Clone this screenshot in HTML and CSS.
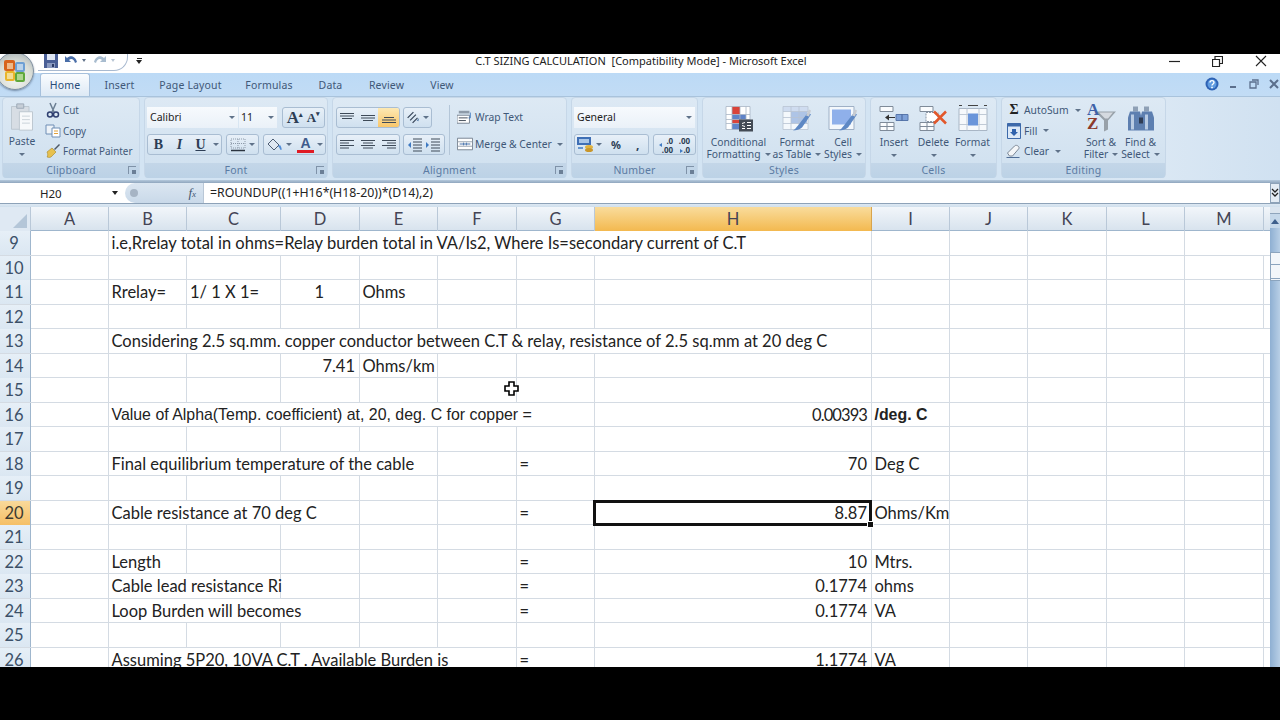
FILE: index.html
```html
<!DOCTYPE html>
<html lang="en">
<head>
<meta charset="utf-8">
<title>C.T SIZING CALCULATION - Microsoft Excel</title>
<link rel="stylesheet" href="styles.css">
</head>
<body>
<div class="app">
  <div class="office-btn">
    <svg width="26" height="26" viewBox="0 0 26 26"><rect x="2" y="2" width="11" height="11" rx="2" fill="#d8631c"/><rect x="5" y="5" width="6" height="6" fill="#eeb98a"/><rect x="13" y="4" width="10" height="10" rx="2" fill="#6d9fd4"/><rect x="15" y="6" width="6" height="6" fill="#b9d2ea"/><rect x="3" y="13" width="10" height="10" rx="2" fill="#e9b52a"/><rect x="5" y="15" width="6" height="6" fill="#f3dc94"/><rect x="13" y="14" width="10" height="10" rx="2" fill="#5fa83c"/><rect x="15" y="16" width="6" height="6" fill="#aed68f"/></svg>
  </div>

  <header class="titlebar">
    <div class="qat">
      <svg width="14" height="14" viewBox="0 0 14 14"><path d="M0 0h14v14H0z" fill="#4a5f96"/><path d="M3 0h8v6H3z" fill="#dfe6f3"/><path d="M3 9h8v5H3z" fill="#8b9ac0"/><path d="M8 10h2v3H8z" fill="#2b3a66"/></svg>
      <svg class="qi" width="14" height="13" viewBox="0 0 14 13"><path d="M1 2v6h6L5 6c2-2 5-1 6 3l2-1C12 3 7 0 3 4z" fill="#4a6ea8"/></svg>
      <span class="caret small"></span>
      <svg class="qi2" width="14" height="13" viewBox="0 0 14 13"><path d="M13 2v6H7l2-2C7 4 4 5 3 9L1 8c1-5 6-8 10-4z" fill="#a8bccf"/></svg>
      <span class="caret small pale"></span>
    </div>
    <span class="qat-more"><i></i><span class="caret small dark"></span></span>
    <div class="title">C.T SIZING CALCULATION&nbsp; [Compatibility Mode] - Microsoft Excel</div>
    <div class="winctl">
      <svg width="11" height="11" viewBox="0 0 11 11"><path d="M0 5.500h11" stroke="#222" stroke-width="1.200"/></svg>
      <svg width="11" height="11" viewBox="0 0 11 11"><path d="M.5 3.500h7v7h-7zM3 3V.5h7.500v7H8" fill="none" stroke="#222" stroke-width="1.200"/></svg>
      <svg width="12" height="12" viewBox="0 0 12 12"><path d="M1 1l10 10M11 1L1 11" stroke="#222" stroke-width="1.100"/></svg>
    </div>
  </header>

  <nav class="tabs">
    <span class="tab active">Home</span>
    <span class="tab w-insert">Insert</span>
    <span class="tab w-layout">Page Layout</span>
    <span class="tab w-form">Formulas</span>
    <span class="tab w-data">Data</span>
    <span class="tab w-review">Review</span>
    <span class="tab w-view">View</span>
    <div class="wb-ctl">
      <svg width="14" height="14" viewBox="0 0 14 14"><circle cx="7" cy="7" r="6.500" fill="#2e62b4"/><circle cx="7" cy="7" r="4.500" fill="#5f9be0"/><path d="M5 5.500c0-2.500 4-2.500 4 0 0 1.500-2 1.500-2 3" fill="none" stroke="#fff" stroke-width="1.400"/><path d="M6.200 9.700h1.600v1.500H6.200z" fill="#fff"/></svg>
      <svg width="10" height="10" viewBox="0 0 10 10"><path d="M1 7h6v2H1z" fill="#5b6f8c"/></svg>
      <svg width="10" height="10" viewBox="0 0 10 10"><path d="M1 3h6v6H1zM3 1h6v5" fill="none" stroke="#5b6f8c" stroke-width="1.300"/></svg>
      <svg width="10" height="10" viewBox="0 0 10 10"><path d="M1 1l8 8M9 1L1 9" stroke="#5b6f8c" stroke-width="2"/></svg>
    </div>
  </nav>

  <section class="ribbon">
    <div class="group g-clip">
      <div class="body">
        <div class="big paste">
          <svg width="26" height="32" viewBox="0 0 26 32"><path d="M1 4h20v26H1z" fill="#d7dde4" stroke="#b9c3cd"/><path d="M7 1h8v5H7z" fill="#c6ced7" stroke="#98a5b3"/><path d="M10 10h15v21H10z" fill="#f7f9fb" stroke="#b8c2cc"/><path d="M13 15h9M13 19h9M13 23h9" stroke="#c6ced6"/></svg>
          <span class="lbl">Paste</span>
          <span class="caret"></span>
        </div>
        <div class="stack clip-stack">
          <div class="sm"><svg width="16" height="16" viewBox="0 0 16 16"><path d="M5 1l4 9M11 1L7 10" stroke="#6a7d92" stroke-width="1.500"/><circle cx="5" cy="12.500" r="2.500" fill="none" stroke="#2f3f70" stroke-width="1.500"/><circle cx="11" cy="12.500" r="2.500" fill="none" stroke="#2f3f70" stroke-width="1.500"/></svg><span>Cut</span></div>
          <div class="sm"><svg width="16" height="14" viewBox="0 0 16 14"><path d="M1 1h8v9H1z" fill="#eef3f8" stroke="#6f8eb5"/><path d="M7 4h8v9H7z" fill="#fff" stroke="#6f8eb5"/><path d="M9 7h4M9 9.500h4" stroke="#e0a03a"/></svg><span>Copy</span></div>
          <div class="sm"><svg width="16" height="16" viewBox="0 0 16 16"><path d="M9 6l5-5 1 1-5 5z" fill="#4d5866"/><path d="M2 9l5-4 4 4-5 5c-2 1-3 0-4 0 1-1 1-3 0-5z" fill="#e7c14f" stroke="#a58528" stroke-width=".6"/></svg><span>Format Painter</span></div>
        </div>
      </div>
      <div class="label">Clipboard<i class="launch"></i></div>
    </div>

    <div class="group g-font">
      <div class="body col">
        <div class="line">
          <div class="combo c-font">Calibri<span class="caret"></span></div>
          <div class="combo c-size">11<span class="caret"></span></div>
          <div class="btns b-size">
            <span class="gl serif big-a">A<sup>&#9652;</sup></span>
            <span class="gl serif small-a">A<sup>&#9662;</sup></span>
          </div>
        </div>
        <div class="line">
          <div class="btns b-bold"><span class="gl serif bold">B</span><span class="gl serif ital">I</span><span class="gl serif under">U</span><span class="caret"></span></div>
          <div class="btns b-border"><svg width="16" height="14" viewBox="0 0 16 14"><path d="M1 1h14v9H1z" fill="none" stroke="#8d9aa9" stroke-dasharray="1 1"/><path d="M1 5.500h14M8 1v9" stroke="#8d9aa9" stroke-dasharray="1 1"/><path d="M1 12.500h14" stroke="#2b3440" stroke-width="1.500"/></svg><span class="caret"></span></div>
          <div class="btns b-fill"><svg width="16" height="14" viewBox="0 0 16 14"><path d="M7 1l6 6-5 5-6-6z" fill="#dfe8f2" stroke="#4d5d73"/><path d="M12 8c2 2 2 4 3 4s1-2-1-5z" fill="#4f8bd6"/></svg><span class="caret"></span><span class="gl acolor">A</span><span class="caret"></span></div>
        </div>
      </div>
      <div class="label">Font<i class="launch"></i></div>
    </div>

    <div class="group g-align">
      <div class="body">
        <div class="col">
          <div class="line">
            <div class="btns b-align">
              <span class="al"><svg width="16" height="12" viewBox="0 0 16 12"><path d="M1 1.500h14M1 4h14M3 6.500h10" stroke="#3e4a58" stroke-width="1.200"/></svg></span>
              <span class="al"><svg width="16" height="12" viewBox="0 0 16 12"><path d="M1 3.500h14M1 6h14M3 8.500h10" stroke="#3e4a58" stroke-width="1.200"/></svg></span>
              <span class="al on"><svg width="16" height="12" viewBox="0 0 16 12"><path d="M3 5.500h10M1 8h14M1 10.500h14" stroke="#3e4a58" stroke-width="1.200"/></svg></span>
            </div>
            <div class="btns b-orient"><svg width="17" height="15" viewBox="0 0 17 15"><path d="M2 8l7-7M5 11l7-7M8 14l6-6" stroke="#37465a" stroke-width="1.500"/><path d="M13 11l3-3-1 4z" fill="#5a7faa"/></svg><span class="caret"></span></div>
          </div>
          <div class="line">
            <div class="btns b-align">
              <span class="al"><svg width="16" height="12" viewBox="0 0 16 12"><path d="M1 1.500h14M1 4h9M1 6.500h14M1 9h9" stroke="#3e4a58" stroke-width="1.200"/></svg></span>
              <span class="al"><svg width="16" height="12" viewBox="0 0 16 12"><path d="M1 1.500h14M3 4h10M1 6.500h14M3 9h10" stroke="#3e4a58" stroke-width="1.200"/></svg></span>
              <span class="al"><svg width="16" height="12" viewBox="0 0 16 12"><path d="M1 1.500h14M6 4h9M1 6.500h14M6 9h9" stroke="#3e4a58" stroke-width="1.200"/></svg></span>
            </div>
            <div class="btns b-indent">
              <svg width="16" height="14" viewBox="0 0 16 14"><path d="M6 1h9M6 4h9M6 7h9M6 10h9M6 13h9" stroke="#3e4a58"/><path d="M4 4L1 7l3 3z" fill="#3f7ac2"/></svg>
              <svg width="16" height="14" viewBox="0 0 16 14"><path d="M6 1h9M6 4h9M6 7h9M6 10h9M6 13h9" stroke="#3e4a58"/><path d="M1 4l3 3-3 3z" fill="#3f7ac2"/></svg>
            </div>
          </div>
        </div>
        <div class="sep"></div>
        <div class="col wrapcol">
          <div class="sm"><svg width="18" height="14" viewBox="0 0 18 14"><path d="M0 5h14v9H0z" fill="#fff" stroke="#6f7b8a"/><path d="M2 8h10M2 11h8" stroke="#333d4a"/><path d="M2 0h12v3H2z" fill="#8e9aa8"/><path d="M15 2v6h-2" fill="none" stroke="#3f7ac2"/></svg><span>Wrap Text</span></div>
          <div class="sm"><svg width="18" height="14" viewBox="0 0 18 14"><path d="M.5.500h17v13H.5z" fill="#fff" stroke="#6f7b8a"/><path d="M.5 4.500h17M.5 9.500h17" stroke="#8d98a6"/><path d="M3 7h4M15 7h-4" stroke="#2f5f9f"/><path d="M7 5v4l2-2zM11 5v4L9 7z" fill="#2f5f9f"/></svg><span>Merge &amp; Center</span><span class="caret merge-caret"></span></div>
        </div>
      </div>
      <div class="label">Alignment<i class="launch"></i></div>
    </div>

    <div class="group g-num">
      <div class="body col">
        <div class="combo c-gen">General<span class="caret"></span></div>
        <div class="line">
          <div class="btns b-money"><svg width="18" height="16" viewBox="0 0 18 16"><path d="M0 0h14v8H0z" fill="#3f6fb5"/><path d="M2 2h10v4H2z" fill="#a9c6e8"/><ellipse cx="12" cy="10" rx="4" ry="2" fill="#e0b23d"/><ellipse cx="12" cy="13" rx="4" ry="2" fill="#c9962a"/><path d="M1 11h5" stroke="#3f7ac2" stroke-width="1.500"/></svg><span class="caret"></span><span class="gl pct">%</span><span class="gl comma">,</span></div>
          <div class="btns b-dec"><span class="dec"><i class="arrow-l"></i><b>.0<br>.00</b></span><span class="dec"><b class="r">.00<br><i class="arrow-r"></i>.0</b></span></div>
        </div>
      </div>
      <div class="label">Number<i class="launch"></i></div>
    </div>

    <div class="group g-styles">
      <div class="body spread">
        <div class="big w-cf">
          <svg width="28" height="26" viewBox="0 0 28 26"><path d="M1 1h24v23H1z" fill="#fff"/><path d="M7 1h8v8H7z" fill="#d9433a"/><path d="M7 9h14v5H7z" fill="#5f83c8"/><path d="M7 14h10v4H7z" fill="#d9433a"/><path d="M7 18h8v6H7z" fill="#5f83c8"/><path d="M1 1h24v23H1zM7 1v23M15 1v23M21 1v23M1 9h24M1 14h24M1 18h24" fill="none" stroke="#a8b5c4" stroke-width=".8"/><path d="M14 14h14v12H14z" fill="#434b55"/><path d="M17 18l3-1M17 20l3 1M22 17h4M22 20h4M17 23h3M22 23h4" stroke="#fff"/></svg>
          <span class="lbl">Conditional<br>Formatting<span class="caret inl"></span></span>
        </div>
        <div class="big w-ft">
          <svg width="30" height="26" viewBox="0 0 30 26"><path d="M1 1h25v23H1z" fill="#f4f8fc"/><path d="M1 1h25v5H1z" fill="#cfdcf0"/><path d="M9 6h16v12H9z" fill="#aec4e6"/><path d="M1 1h25v23H1zM9 1v23M17 1v23M1 6h25M1 12h25M1 18h25" fill="none" stroke="#b7c3d2" stroke-width=".8"/><path d="M16 20l10-13 3 2-9 13c-2 2-6 3-9 3 2-1 3-3 5-5z" fill="#5e88c4"/><path d="M24 10l3-6 2 1-2 6z" fill="#c8ccd2"/></svg>
          <span class="lbl">Format<br>as Table<span class="caret inl"></span></span>
        </div>
        <div class="big w-cs">
          <svg width="30" height="26" viewBox="0 0 30 26"><path d="M1 1h25v23H1z" fill="#f4f8fc" stroke="#9fb0c6"/><path d="M4 4h19v15H4z" fill="#8fb0ea"/><path d="M16 20l10-13 3 2-9 13c-2 2-6 3-9 3 2-1 3-3 5-5z" fill="#5e88c4"/><path d="M24 10l3-6 2 1-2 6z" fill="#c8ccd2"/></svg>
          <span class="lbl">Cell<br>Styles<span class="caret inl"></span></span>
        </div>
      </div>
      <div class="label">Styles</div>
    </div>

    <div class="group g-cells">
      <div class="body spread">
        <div class="big w-cell">
          <svg width="30" height="26" viewBox="0 0 30 26"><path d="M1 1h13v5H1zM1 17h14v8H1zM8 17v8M1 21h14" fill="#fafcfe" stroke="#7f8b99"/><path d="M17 9h12v6H17z" fill="#7ea1d8" stroke="#5877ab"/><path d="M23 9v6" stroke="#46639b"/><path d="M8 12h8" stroke="#333"/><path d="M6 12l4-3v6z" fill="#333"/></svg>
          <span class="lbl">Insert</span><span class="caret"></span>
        </div>
        <div class="big w-cell">
          <svg width="30" height="26" viewBox="0 0 30 26"><path d="M1 1h13v5H1zM1 17h14v8H1zM8 17v8M1 21h14" fill="#fafcfe" stroke="#7f8b99"/><path d="M7 7h12v9H7z" fill="#fff" stroke="#8a96a5" stroke-dasharray="2 1"/><path d="M15 6l12 12M27 6L15 18" stroke="#e2572b" stroke-width="2.500"/></svg>
          <span class="lbl">Delete</span><span class="caret"></span>
        </div>
        <div class="big w-cell">
          <svg width="30" height="28" viewBox="0 0 30 28"><path d="M1 1h3M10 1h10M26 1h3" stroke="#444"/><path d="M1 4h28v22H1z" fill="#f6f9fc" stroke="#a9b6c5"/><path d="M9 4v22M21 4v22M1 10h28M1 20h28" stroke="#c0cad6"/><path d="M10 9h10v12H10z" fill="#6a95da"/></svg>
          <span class="lbl">Format</span><span class="caret"></span>
        </div>
      </div>
      <div class="label">Cells</div>
    </div>

    <div class="group g-edit">
      <div class="body">
        <div class="stack edit-stack">
          <div class="sm"><span class="sigma">&#931;</span><span>AutoSum</span><span class="caret"></span></div>
          <div class="sm"><svg width="14" height="16" viewBox="0 0 14 16"><path d="M.5.500h13v15H.5z" fill="#dbe8f7" stroke="#3c69aa"/><path d="M.5.500h13v3H.5z" fill="#3c69aa"/><path d="M5 6h4v3h2l-4 4-4-4h2z" fill="#2f62ad"/></svg><span>Fill</span><span class="caret"></span></div>
          <div class="sm"><svg width="15" height="14" viewBox="0 0 15 14"><path d="M1 9l7-7c2-2 6 1 4 3l-6 7H3z" fill="#f4f6f8" stroke="#7c8795"/><path d="M0 13.500h13" stroke="#4f6d96"/></svg><span>Clear</span><span class="caret"></span></div>
        </div>
        <div class="big w-sort">
          <svg width="30" height="28" viewBox="0 0 30 28"><path d="M9 7h21l-8 9v9l-4 2V16z" fill="#98a1a9"/><path d="M13 8h14l-5 6h-3z" fill="#d5dae0"/></svg>
          <span class="az a">A</span><span class="az z">Z</span>
          <span class="lbl">Sort &amp;<br>Filter<span class="caret inl"></span></span>
        </div>
        <div class="big w-find">
          <svg width="28" height="26" viewBox="0 0 28 26"><path d="M6 1h5v5H6zM17 1h5v5h-5z" fill="#8ea0b6"/><path d="M3 6h10l1 4h0v15H1V12z" fill="#5d7fb0"/><path d="M15 6h10l2 6v13H14V10z" fill="#5d7fb0"/><path d="M4 9h3v15H4zM18 9h3v15h-3z" fill="#b8cbe3"/><path d="M12 12h4v6h-4z" fill="#2e3c54"/></svg>
          <span class="lbl">Find &amp;<br>Select<span class="caret inl"></span></span>
        </div>
      </div>
      <div class="label">Editing</div>
    </div>
  </section>

  <div class="divider"></div>

  <section class="formula">
    <div class="namebox">H20<span class="caret dark"></span></div>
    <div class="fxarea"><span class="pill"></span><span class="fx">f<small>x</small></span></div>
    <div class="finput">=ROUNDUP((1+H16*(H18-20))*(D14),2)</div>
    <div class="fexpand"><svg width="8" height="10" viewBox="0 0 8 10"><path d="M1 1l3 3 3-3M1 5l3 3 3-3" fill="none" stroke="#222" stroke-width="1.300"/></svg></div>
  </section>

  <div class="gapband"></div>

  <main class="sheet">
    <div class="grid">
      <div class="row head">
        <div class="corner"><i></i></div><div>A</div><div>B</div><div>C</div><div>D</div><div>E</div><div>F</div><div>G</div><div class="hi">H</div><div>I</div><div>J</div><div>K</div><div>L</div><div>M</div><div class="fill"></div>
      </div>
      <div class="row"><div class="rh">9</div><div></div><div class="s7">i.e,Rrelay total in ohms=Relay burden total in VA/Is2, Where Is=secondary current of C.T</div><div></div><div></div><div></div><div></div></div>
      <div class="row"><div class="rh">10</div><div></div><div></div><div></div><div></div><div></div><div></div><div></div><div></div><div></div><div></div><div></div><div></div><div></div></div>
      <div class="row"><div class="rh">11</div><div></div><div>Rrelay=</div><div class="c">1/ 1 X 1=</div><div class="ctr">1</div><div>Ohms</div><div></div><div></div><div></div><div></div><div></div><div></div><div></div><div></div></div>
      <div class="row"><div class="rh">12</div><div></div><div></div><div></div><div></div><div></div><div></div><div></div><div></div><div></div><div></div><div></div><div></div><div></div></div>
      <div class="row"><div class="rh">13</div><div></div><div class="s7">Considering 2.5 sq.mm. copper conductor between C.T &amp; relay, resistance of 2.5 sq.mm at 20 deg C</div><div></div><div></div><div></div><div></div></div>
      <div class="row"><div class="rh">14</div><div></div><div></div><div></div><div class="r">7.41</div><div>Ohms/km</div><div></div><div></div><div></div><div></div><div></div><div></div><div></div><div></div></div>
      <div class="row"><div class="rh">15</div><div></div><div></div><div></div><div></div><div></div><div></div><div></div><div></div><div></div><div></div><div></div><div></div><div></div></div>
      <div class="row"><div class="rh">16</div><div></div><div class="s6 arial">Value of Alpha(Temp. coefficient) at, 20, deg. C for copper =</div><div class="r tight">0.00393</div><div class="arial bold">/deg. C</div><div></div><div></div><div></div><div></div></div>
      <div class="row"><div class="rh">17</div><div></div><div></div><div></div><div></div><div></div><div></div><div></div><div></div><div></div><div></div><div></div><div></div><div></div></div>
      <div class="row"><div class="rh">18</div><div></div><div class="s4">Final equilibrium temperature of the cable</div><div></div><div>=</div><div class="r">70</div><div>Deg C</div><div></div><div></div><div></div><div></div></div>
      <div class="row"><div class="rh">19</div><div></div><div></div><div></div><div></div><div></div><div></div><div></div><div></div><div></div><div></div><div></div><div></div><div></div></div>
      <div class="row"><div class="rh hi">20</div><div></div><div class="s3">Cable resistance at 70 deg C</div><div></div><div></div><div>=</div><div class="r sel">8.87</div><div>Ohms/Km</div><div></div><div></div><div></div><div></div></div>
      <div class="row"><div class="rh">21</div><div></div><div></div><div></div><div></div><div></div><div></div><div></div><div></div><div></div><div></div><div></div><div></div><div></div></div>
      <div class="row"><div class="rh">22</div><div></div><div>Length</div><div></div><div></div><div></div><div></div><div>=</div><div class="r">10</div><div>Mtrs.</div><div></div><div></div><div></div><div></div></div>
      <div class="row"><div class="rh">23</div><div></div><div class="s2">Cable lead resistance Ri</div><div></div><div></div><div></div><div>=</div><div class="r">0.1774</div><div>ohms</div><div></div><div></div><div></div><div></div></div>
      <div class="row"><div class="rh">24</div><div></div><div class="s3">Loop Burden will becomes</div><div></div><div></div><div>=</div><div class="r">0.1774</div><div>VA</div><div></div><div></div><div></div><div></div></div>
      <div class="row"><div class="rh">25</div><div></div><div></div><div></div><div></div><div></div><div></div><div></div><div></div><div></div><div></div><div></div><div></div><div></div></div>
      <div class="row"><div class="rh">26</div><div></div><div class="s5">Assuming 5P20, 10VA C.T . Available Burden is</div><div>=</div><div class="r">1.1774</div><div>VA</div><div></div><div></div><div></div><div></div></div>
    </div>
    <div class="scrollbar">
      <div class="sb-top"></div>
      <div class="sb-up"><span></span></div>
      <div class="sb-thumb"></div>
    </div>
    <svg class="cursor" width="15" height="15" viewBox="0 0 15 15"><path d="M5 1h5v4h4v5h-4v4H5v-4H1V5h4z" fill="#fff" stroke="#000" stroke-width="1.600"/></svg>
  </main>
</div>
</body>
</html>
```
FILE: styles.css
```css
* { box-sizing: border-box; }
html, body { margin: 0; height: 100%; }
body { background: #000; overflow: hidden; font-family: "Noto Sans", "Open Sans", sans-serif; }

.app { position: relative; margin-top: 54px; height: 613px; width: 1280px; background: #fff; overflow: hidden; display: flex; flex-direction: column; }

.office-btn { position: absolute; left: -4px; top: -2px; width: 38px; height: 38px; border-radius: 50%; background: radial-gradient(circle at 50% 70%, #f4f6f4 0, #d8dcd6 55%, #9aa6ad 100%); border: 1px solid #7f8f9f; display: flex; align-items: center; justify-content: center; z-index: 3; box-shadow: 0 1px 2px rgba(40,60,90,.5); }

.titlebar { height: 19px; flex: none; display: flex; align-items: flex-start; background: #fff; position: relative; }
.qat { width: 90px; height: 17px; margin-left: 38px; padding: 0 0 3px 6px; display: flex; align-items: center; gap: 4px; border: 1px solid #a9bad0; border-top: 0; border-left: 0; border-radius: 0 0 14px 0; }
.qi { margin-left: 2px; }
.qi2 { margin-left: 3px; }
.qat-more { margin: 4px 0 0 8px; display: flex; flex-direction: column; align-items: center; gap: 1px; }
.qat-more i { width: 5px; height: 1px; background: #222; }
.title { position: absolute; left: 0; right: 0; top: 0; text-align: center; padding-left: 2px; font: 11px/14px "Noto Sans", sans-serif; color: #222; }
.winctl { margin-left: auto; display: flex; align-items: center; gap: 32px; padding-right: 13px; margin-top: 1px; }

.caret { display: inline-block; width: 0; height: 0; border-left: 3px solid transparent; border-right: 3px solid transparent; border-top: 3px solid #5f7289; flex: none; }
.caret.small { border-left-width: 2.500px; border-right-width: 2.500px; }
.caret.pale { border-top-color: #b9c6d4; }
.caret.dark { border-top-color: #222; border-left-width: 3.500px; border-right-width: 3.500px; border-top-width: 4px; }
.caret.inl { margin-left: 4px; vertical-align: 2px; }

.tabs { height: 23px; flex: none; display: flex; align-items: flex-end; background: linear-gradient(#bcdaf6, #c2dcf5); font-size: 10.500px; color: #3f5878; padding-left: 40px; position: relative; }
.tab { height: 22px; line-height: 22px; text-align: center; flex: none; letter-spacing: .15px; }
.tab.active { width: 50px; height: 23px; background: linear-gradient(#fafcfe, #dde9f5); border: 1px solid #a6c0dc; border-bottom: 0; border-radius: 3px 3px 0 0; color: #264b78; }
.w-insert { width: 59px; }
.w-layout { width: 83px; }
.w-form { width: 74px; }
.w-data { width: 49px; }
.w-review { width: 63px; }
.w-view { width: 48px; }
.wb-ctl { align-self: center; display: flex; align-items: center; gap: 10px; margin: 0 1px 1px auto; }

.ribbon { height: 84px; flex: none; padding: 0 0 0 2px; display: flex; gap: 4px; background: linear-gradient(90deg, #d3e4f3, #d3e4f3 80%, #dbe8f4 90%, #d0e1f1); border-top: 1px solid #a9c3dc; }
.group { display: flex; flex-direction: column; height: 81px; border-radius: 4px; border: 1px solid #c6d7e8; background: linear-gradient(#dde9f4, #cfe0ef); position: relative; }
.g-clip { width: 138px; } .g-font { width: 184px; } .g-align { width: 235px; } .g-num { width: 127px; }
.g-styles { width: 164px; } .g-cells { width: 127px; } .g-edit { width: 165px; }
.body { height: 65px; flex: none; display: flex; font-size: 10.300px; color: #3f5878; }
.col { display: flex; flex-direction: column; gap: 6px; }
.body.col { padding: 9px 0 0 2px; }
.label { height: 15px; flex: none; font-size: 10.500px; line-height: 15px; text-align: center; color: #5b7ba3; background: linear-gradient(#c3d6e8, #bcd2e6); border-radius: 0 0 3px 3px; position: relative; letter-spacing: .2px; }
.launch { position: absolute; right: 3px; top: 3px; width: 8px; height: 8px; border: 1px solid #7f92a8; border-width: 1px 0 0 1px; }
.launch::after { content: ""; position: absolute; right: 0; bottom: 0; width: 4px; height: 4px; background: #6b7f96; }

.big { display: flex; flex-direction: column; align-items: center; text-align: center; padding-top: 6px; flex: none; position: relative; }
.big svg { height: 29px; flex: none; }
.lbl { line-height: 12px; margin-top: 3px; white-space: nowrap; }
.big > .caret { margin-top: 6px; }
.paste { width: 38px; padding-top: 5px; }
.paste svg { height: 28px; }
.paste .lbl { margin-top: 4px; }
.stack { display: flex; flex-direction: column; padding: 2px 0 0 4px; }
.clip-stack { font-size: 9.900px; }
.sm { height: 20.500px; display: flex; align-items: center; white-space: nowrap; gap: 2px; }
.sm svg { flex: none; width: 16px; }

.line { display: flex; gap: 4px; height: 21px; }
.combo { height: 21px; background: linear-gradient(#f7fafd, #eaf1f8); display: flex; align-items: center; justify-content: space-between; padding: 0 3px 1px 3px; color: #222; font-size: 10.500px; }
.c-font { width: 91px; }
.c-size { width: 38px; margin-left: -3px; padding-left: 2px; }
.c-gen { width: 121px; }
.btns { height: 21px; border: 1px solid #a9bdd2; border-radius: 3px; background: linear-gradient(#e8f0f8, #cfe0ef); display: flex; align-items: center; justify-content: space-around; padding: 0 2px; color: #2d3e55; }
.b-size { width: 43px; margin-left: 1px; }
.b-bold { width: 75px; padding: 0; justify-content: flex-start; }
.b-bold .gl { width: 21px; text-align: center; font-size: 14px; line-height: 1; }
.b-bold .caret { margin-left: 2px; }
.b-border { width: 33px; }
.b-fill { width: 63px; justify-content: flex-start; }
.b-fill .caret { margin-left: 3px; }
.b-fill .caret:nth-child(2) { margin-left: 4px; }
.b-fill .acolor { margin-left: 5px; width: 17px; text-align: center; }
.gl { font-size: 13px; }
.serif { font-family: "Liberation Serif", serif; }
.big-a { font-size: 17px; font-weight: bold; line-height: 1; }
.small-a { font-size: 13px; font-weight: bold; line-height: 1; }
.big-a sup, .small-a sup { font-size: 7px; vertical-align: 6px; }
.bold { font-weight: bold; }
.ital { font-style: italic; font-weight: bold; }
.under { text-decoration: underline; font-weight: bold; }
.acolor { font: bold 14px/1 "Liberation Sans", sans-serif; color: #3f5b8c; border-bottom: 3px solid #e01b24; }

.g-align .body { padding: 9px 0 0 3px; }
.g-align .line { gap: 3px; }
.b-align { width: 64px; padding: 0; justify-content: flex-start; overflow: hidden; }
.al { width: 21px; height: 19px; display: flex; align-items: center; justify-content: center; }
.al.on { background: linear-gradient(#fde9b4, #f9c76b); }
.b-orient { width: 29px; padding: 0 1px; gap: 0; }
.b-orient svg { width: 14px; }
.b-indent { width: 42px; padding: 0 2px; }
.sep { width: 1px; height: 50px; margin: -2px 0 0 4px; background: #b4c6d8; }
.wrapcol { margin-left: 7px; gap: 5px; margin-top: -1px; }
.wrapcol .sm { height: 22px; }
.wrapcol svg { width: 16px; }
.merge-caret { margin-left: 3px; }

.b-money { width: 75px; justify-content: flex-start; }
.b-money .caret { margin-left: 1px; }
.b-dec { width: 43px; }
.pct { font: bold 11px "Noto Sans", sans-serif; margin-left: 9px; }
.comma { font: bold 12px "Noto Sans", sans-serif; line-height: 8px; margin-left: 15px; }
.dec { font: bold 8px/9px "Noto Sans", sans-serif; display: flex; align-items: center; color: #2d3e55; }
.dec b { font-weight: bold; text-align: right; display: block; }
.arrow-l, .arrow-r { display: inline-block; width: 0; height: 0; border: 2.500px solid transparent; }
.arrow-l { border-right: 3px solid #3f7ac2; border-left: 0; }
.arrow-r { border-left: 3px solid #3f7ac2; border-right: 0; }

.spread { padding-left: 0; }
.w-cf { width: 71px; }
.w-ft { width: 50px; margin-left: -2px; }
.w-cs { width: 42px; }
.w-cell { width: 39px; }
.g-cells .body { padding-left: 3px; }
.w-cell:nth-child(1) { width: 40px; }
.edit-stack { padding-left: 4px; width: 82px; }
.sigma { width: 16px; font: bold 14px "Liberation Serif", serif; color: #222; text-align: center; }
.edit-stack .caret { margin-left: 4px; }
.w-sort { width: 38px; margin-left: -2px; }
.w-sort svg { width: 30px; }
.w-find { width: 39px; margin-left: 1px; }
.az { position: absolute; left: 5px; font: bold 17px/14px "Liberation Serif", serif; }
.az.a { top: 5px; color: #3f62a8; }
.az.z { top: 19px; color: #8c3a2c; }

.divider { height: 3px; flex: none; background: linear-gradient(#b4c8dc, #8fa6bd); }

.formula { height: 21px; flex: none; display: flex; border-bottom: 1px solid #8da2b8; font: 11.500px "Noto Sans", sans-serif; color: #222; }
.namebox { width: 125px; padding: 0 7px 0 40px; display: flex; align-items: center; justify-content: space-between; }
.fxarea { width: 79px; display: flex; align-items: center; justify-content: space-between; padding: 0 7px 0 5px; border-right: 1px solid #b9c7d6; border-radius: 10px 0 0 10px; background: linear-gradient(#dbe6f1, #c9d9e9); }
.pill { width: 8px; height: 8px; border-radius: 50%; background: #a6b4c4; }
.fx { font: italic 13px "Liberation Serif", serif; color: #43576f; }
.fx small { font-size: 9px; }
.finput { flex: 1; padding-left: 6px; font: 12.300px/20px "Noto Sans", sans-serif; }
.fexpand { width: 10px; display: flex; align-items: center; justify-content: center; border: 1px solid #8da2b8; background: #e4ecf4; }

.gapband { height: 3px; flex: none; background: linear-gradient(#dde8f2, #cfdfed); }

.sheet { flex: 1; min-height: 0; display: flex; overflow: hidden; position: relative; }
.grid { width: 1270px; flex: none; font: 16.500px/24px Lato, sans-serif; color: #222; }
.row { display: grid; grid-template-columns: 31px 78px 78px 94px 79px 78px 79px 78px 277px 78px 78px 79px 78px 79px 6px; height: 24.500px; border-bottom: 1px solid #d4dbe3; }
.row > div { border-right: 1px solid #d4dbe3; white-space: nowrap; padding: 0 4px 0 2.500px; min-width: 0; }
.row > .s2 { grid-column: span 2; } .row > .s3 { grid-column: span 3; } .row > .s4 { grid-column: span 4; }
.row > .s5 { grid-column: span 5; } .row > .s6 { grid-column: span 6; } .row > .s7 { grid-column: span 7; }
.row > .r { text-align: right; }
.row > .tight { letter-spacing: -.9px; }
.row > .ctr { text-align: center; }
.row > .c { padding-left: 3px; }
.row > .arial { font-family: "Liberation Sans", sans-serif; font-size: 15.900px; }
.row > .arial.bold { font-weight: bold; }
.row > .rh { background: linear-gradient(#e6eff7, #dbe7f2); text-align: center; color: #3c5068; border-right-color: #9fb6cd; padding: 0 2px 0 0; }
.row > .rh.hi { background: linear-gradient(#f9d99a, #f5bf66); color: #3c3a30; }
.head { height: 24px; font-size: 16.500px; background: linear-gradient(#f2f6fa, #d8e3ee); color: #445; border-bottom: 1px solid #9fb6cd; }
.head > div { text-align: center; border-right-color: #b9c8d8; line-height: 24px; }
.row.head > div { padding: 0; }
.head > .hi { background: linear-gradient(#f9dc9c, #f3b94f); border-right-color: #d8a44c; }
.head > .fill { border-right: 0; }
.corner { position: relative; background: #dfe9f3; }
.corner i { position: absolute; right: 3px; bottom: 3px; border-left: 14px solid transparent; border-bottom: 14px solid #b4c6d8; }
.row > .sel { position: relative; }
.sel::after { content: ""; position: absolute; left: -2px; top: -1px; right: -1px; bottom: -1px; border: 3px solid #111; }
.sel::before { content: ""; position: absolute; right: -3px; bottom: -3px; width: 5px; height: 5px; background: #111; border: 1px solid #fff; box-sizing: content-box; z-index: 2; }

.scrollbar { width: 10px; flex: none; background: linear-gradient(90deg, #8eafd2, #b8cfe6); display: flex; flex-direction: column; }
.sb-top { height: 7px; background: #dbe5ef; border-bottom: 1px solid #8fa5bc; }
.sb-up { height: 14px; display: flex; justify-content: center; align-items: center; background: #c5d8ea; }
.sb-up span { border-left: 4px solid transparent; border-right: 4px solid transparent; border-bottom: 5px solid #3d5f8c; }
.sb-thumb { height: 29px; margin-top: 24px; background: repeating-linear-gradient(#f2f6fa 0 11px, #8ba4be 11px 12px, #f2f6fa 12px 14px); border: 1px solid #8ba4be; border-right: 0; }

.cursor { position: absolute; left: 504px; top: 174px; }
```
